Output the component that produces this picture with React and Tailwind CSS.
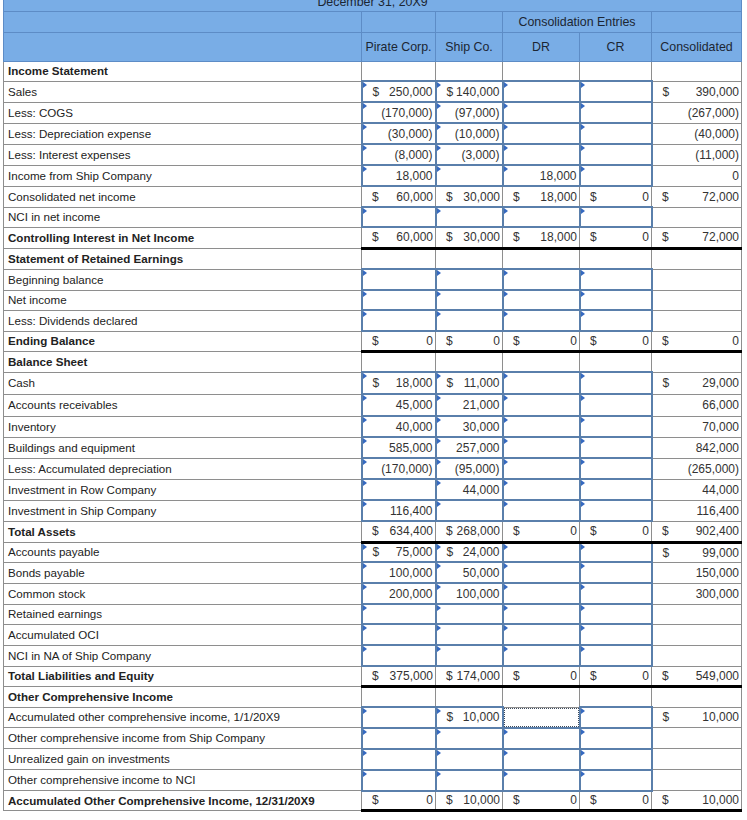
import React from 'react';

const HEIGHT = { 20: 'h-[20px]', 21: 'h-[21px]', 22: 'h-[22px]' };

const E = ['', '', '', '', ''];

const rows = [
  { label: 'Income Statement', bold: true, kind: 'sec', h: 20 },
  { label: 'Sales', kind: 'in', h: 21, v: ['$ 250,000', '$ 140,000', '', '', '$ 390,000'] },
  { label: 'Less: COGS', kind: 'in', h: 21, v: ['(170,000)', '(97,000)', '', '', '(267,000)'] },
  { label: 'Less: Depreciation expense', kind: 'in', h: 21, v: ['(30,000)', '(10,000)', '', '', '(40,000)'] },
  { label: 'Less: Interest expenses', kind: 'in', h: 21, v: ['(8,000)', '(3,000)', '', '', '(11,000)'] },
  { label: 'Income from Ship Company', kind: 'in', h: 21, v: ['18,000', '', '18,000', '', '0'] },
  { label: 'Consolidated net income', kind: 'sub', h: 21, v: ['$ 60,000', '$ 30,000', '$ 18,000', '$ 0', '$ 72,000'] },
  { label: 'NCI in net income', kind: 'in', h: 20, v: E },
  { label: 'Controlling Interest in Net Income', bold: true, kind: 'tot', h: 21, v: ['$ 60,000', '$ 30,000', '$ 18,000', '$ 0', '$ 72,000'] },
  { label: 'Statement of Retained Earnings', bold: true, kind: 'sec', h: 21 },
  { label: 'Beginning balance', kind: 'in', h: 21, v: E },
  { label: 'Net income', kind: 'in', h: 20, v: E },
  { label: 'Less: Dividends declared', kind: 'in', h: 21, v: E },
  { label: 'Ending Balance', bold: true, kind: 'tot', h: 20, v: ['$ 0', '$ 0', '$ 0', '$ 0', '$ 0'] },
  { label: 'Balance Sheet', bold: true, kind: 'sec', h: 21 },
  { label: 'Cash', kind: 'in', h: 22, v: ['$ 18,000', '$ 11,000', '', '', '$ 29,000'] },
  { label: 'Accounts receivables', kind: 'in', h: 22, v: ['45,000', '21,000', '', '', '66,000'] },
  { label: 'Inventory', kind: 'in', h: 21, v: ['40,000', '30,000', '', '', '70,000'] },
  { label: 'Buildings and equipment', kind: 'in', h: 21, v: ['585,000', '257,000', '', '', '842,000'] },
  { label: 'Less: Accumulated depreciation', kind: 'in', h: 21, v: ['(170,000)', '(95,000)', '', '', '(265,000)'] },
  { label: 'Investment in Row Company', kind: 'in', h: 21, v: ['', '44,000', '', '', '44,000'] },
  { label: 'Investment in Ship Company', kind: 'in', h: 21, v: ['116,400', '', '', '', '116,400'] },
  { label: 'Total Assets', bold: true, kind: 'tot', h: 21, v: ['$ 634,400', '$ 268,000', '$ 0', '$ 0', '$ 902,400'] },
  { label: 'Accounts payable', kind: 'in', h: 20, v: ['$ 75,000', '$ 24,000', '', '', '$ 99,000'] },
  { label: 'Bonds payable', kind: 'in', h: 21, v: ['100,000', '50,000', '', '', '150,000'] },
  { label: 'Common stock', kind: 'in', h: 21, v: ['200,000', '100,000', '', '', '300,000'] },
  { label: 'Retained earnings', kind: 'in', h: 20, v: E },
  { label: 'Accumulated OCI', kind: 'in', h: 21, v: E },
  { label: 'NCI in NA of Ship Company', kind: 'in', h: 21, v: E },
  { label: 'Total Liabilities and Equity', bold: true, kind: 'tot', h: 20, v: ['$ 375,000', '$ 174,000', '$ 0', '$ 0', '$ 549,000'] },
  { label: 'Other Comprehensive Income', bold: true, kind: 'sec', h: 21 },
  { label: 'Accumulated other comprehensive income, 1/1/20X9', kind: 'in', h: 20, v: ['', '$ 10,000', '', '', '$ 10,000'], focus: 2 },
  { label: 'Other comprehensive income from Ship Company', kind: 'in', h: 21, v: E },
  { label: 'Unrealized gain on investments', kind: 'in', h: 21, v: E },
  { label: 'Other comprehensive income to NCI', kind: 'in', h: 21, v: E },
  { label: 'Accumulated Other Comprehensive Income, 12/31/20X9', bold: true, kind: 'tot', h: 20, v: ['$ 0', '$ 10,000', '$ 0', '$ 0', '$ 10,000'] },
];

const Num = ({ v }) => {
  if (!v) return null;
  if (v.startsWith('$ ')) {
    return (
      <div className="flex justify-between pl-[10px] pr-[2px]">
        <span>$</span>
        <span>{v.slice(2)}</span>
      </div>
    );
  }
  return <div className="text-right pr-[2px]">{v}</div>;
};

const ValueCell = ({ row, i }) => {
  const v = row.v ? row.v[i] : '';
  const isInput = row.kind === 'in' && i < 4;

  if (isInput && row.focus === i) {
    return (
      <td className="p-0 border border-[#8e8e8e]">
        <div className="h-[19px] border border-dotted border-[#3c4a5c]" />
      </td>
    );
  }

  if (isInput) {
    return (
      <td className="relative p-0 border-2 border-[#5a7fab]">
        <span className="absolute left-0 top-0 w-0 h-0 border-y-[3px] border-y-transparent border-l-[4px] border-l-[#3569c0]" />
        <Num v={v} />
      </td>
    );
  }

  if (row.kind === 'sub') {
    return (
      <td className="p-0 border border-[#8e8e8e] border-t-black">
        <Num v={v} />
      </td>
    );
  }

  if (row.kind === 'tot') {
    return (
      <td className="p-0 border border-[#8e8e8e] border-t-black border-b-[3px] border-b-black">
        <Num v={v} />
      </td>
    );
  }

  return (
    <td className="p-0 border border-[#8e8e8e]">
      <Num v={v} />
    </td>
  );
};

const App = () => {
  return (
    <div className="w-[747px] h-[820px] bg-white pl-[3px] font-['Liberation_Sans',Arial,sans-serif] text-[12px] leading-[14px]">
      <table className="table-fixed border-collapse w-[738px]">
        <colgroup>
          <col className="w-[358px]" />
          <col className="w-[74px]" />
          <col className="w-[67px]" />
          <col className="w-[77px]" />
          <col className="w-[72px]" />
          <col className="w-[90px]" />
        </colgroup>
        <thead className="bg-[#79ade6] text-[#1c2633] text-[12.4px]">
          <tr className="h-[11px]">
            <th colSpan={6} className="p-0 font-normal border-x border-b border-[#5d8cc6]">
              <div className="h-[10px] overflow-hidden">
                <div className="-mt-[5px] text-center">December 31, 20X9</div>
              </div>
            </th>
          </tr>
          <tr className="h-[21px]">
            <th className="p-0 font-normal border border-[#5d8cc6]"></th>
            <th className="p-0 font-normal border border-[#5d8cc6]"></th>
            <th className="p-0 font-normal border border-[#5d8cc6]"></th>
            <th colSpan={2} className="p-0 font-normal text-center border border-[#5d8cc6]">Consolidation Entries</th>
            <th className="p-0 font-normal border border-[#5d8cc6]"></th>
          </tr>
          <tr className="h-[29px]">
            <th className="p-0 font-normal border border-[#5d8cc6]"></th>
            <th className="p-0 font-normal text-center border border-[#5d8cc6]">Pirate Corp.</th>
            <th className="p-0 font-normal text-center border border-[#5d8cc6]">Ship Co.</th>
            <th className="p-0 font-normal text-center border border-[#5d8cc6]">DR</th>
            <th className="p-0 font-normal text-center border border-[#5d8cc6]">CR</th>
            <th className="p-0 font-normal text-center border border-[#5d8cc6]">Consolidated</th>
          </tr>
        </thead>
        <tbody className="text-[#333]">
          {rows.map((row) => (
            <tr key={row.label} className={HEIGHT[row.h]}>
              <td className={`p-0 pl-[4px] border border-[#8e8e8e] text-[#222] text-[11.6px] ${row.bold ? 'font-bold' : ''}`}>
                {row.label}
              </td>
              {[0, 1, 2, 3, 4].map((i) => (
                <ValueCell key={i} row={row} i={i} />
              ))}
            </tr>
          ))}
        </tbody>
      </table>
    </div>
  );
};

export default App;
